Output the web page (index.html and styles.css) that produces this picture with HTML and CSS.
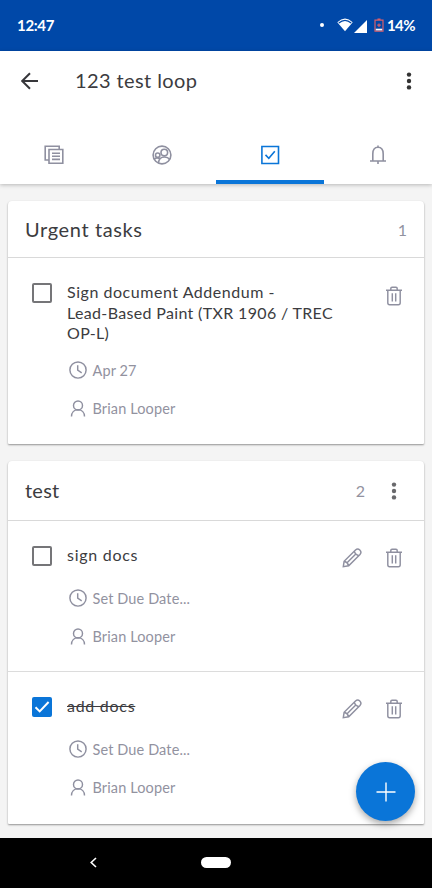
FILE: index.html
```html
<!DOCTYPE html>
<html lang="en">
<head>
<meta charset="utf-8">
<title>123 test loop</title>
<link rel="stylesheet" href="styles.css">
</head>
<body>
<svg class="defs" aria-hidden="true">
  <symbol id="trash" viewBox="0 0 18 20"><path d="M1 4.2h16M5.800 4V2.400Q5.800 1.300 7 1.300h4q1.200 0 1.200 1.100V4M2.800 4.500v12.200q0 2 1.800 2h8.800q1.800 0 1.800-2V4.500M7.300 7.300v8.300M10.700 7.300v8.300"/></symbol>
  <symbol id="pencil" viewBox="0 0 20 20"><path d="M1.300 18.700l.8-5.400L13.500 2q2.200-2 4.300 0 2.200 2.200.2 4.400L6.700 17.800zM2.100 13.300q3.300.7 4.600 4.500M5.300 14.600L13.800 6.100M12.300 3.200q.7 3.400 4.500 4.500"/></symbol>
  <symbol id="clock" viewBox="0 0 18 18"><circle cx="9" cy="9" r="8.100"/><path d="M8.700 4.200V9.200L12.700 11.800"/></symbol>
  <symbol id="person" viewBox="0 0 16 17"><circle cx="8" cy="5.400" r="4.500"/><path d="M1.500 16.500c0-4 2.500-6.700 6.500-6.700s6.500 2.700 6.500 6.700"/></symbol>
</svg>
<div class="status">
  <span class="time">12:47</span>
  <i class="dot"></i>
  <svg class="wifi" viewBox="0 0 16 14"><path d="M.3 4.200Q8-3 15.700 4.200L8 13.200z" fill="#fff"/><path d="M1.800 5.100Q8-.4 14.200 5.100" fill="none" stroke="#0048a8" stroke-width="1.300"/></svg>
  <svg class="signal" viewBox="0 0 13 13"><path d="M0 13L13 0v13z" fill="#fff"/></svg>
  <svg class="battery" viewBox="0 0 10 14"><path d="M1 2.200h8v11H1zM3.500 1.200h3M3.200 7.200h3.600M5 5.400v3.600" fill="none" stroke="#d95f6b" stroke-width="1.200"/><path d="M1.800 10.700h6.400v1.700H1.800z" fill="#fff"/></svg>
  <span class="pct">14%</span>
</div>
<header>
  <div class="bar">
    <svg class="back" viewBox="0 0 18 18"><path d="M17 9H1.500M9 1.200L1.200 9 9 16.800"/></svg>
    <h1>123 test loop</h1>
    <svg class="more" viewBox="0 0 6 18"><circle cx="3" cy="2.600" r="2.200"/><circle cx="3" cy="9" r="2.200"/><circle cx="3" cy="15.400" r="2.200"/></svg>
  </div>
  <nav class="tabs">
    <div class="tab"><svg class="icon" viewBox="0 0 20 20"><path d="M4.600 15H1.200V1.200h14v3.200M5 4.500h13.800v13.800H5zM8 8.200h8M8 11.300h8M8 14.400h8"/></svg></div>
    <div class="tab"><svg class="icon" viewBox="0 0 20 20"><circle cx="10" cy="10" r="8.900"/><circle cx="12.300" cy="7.600" r="3.300"/><circle cx="5.700" cy="10.200" r="2.200"/><path d="M6.500 18q.3-6 6-6 3.400 0 5.300 2.500M2.100 14.300q2-2.200 5.600-.9"/></svg></div>
    <div class="tab active"><svg class="icon" viewBox="0 0 20 20"><path d="M1.900 1.500h16.600v17H1.900zM5.500 9.900l3.300 3.300 6-7"/></svg></div>
    <div class="tab"><svg class="icon" viewBox="0 0 20 20"><path d="M4.800 16V9q0-6.700 5.200-6.700T15.200 9v7M2 16h16M10 2.300V.6M10 16v3"/></svg></div>
  </nav>
</header>
<main>
  <section class="card">
    <div class="head"><h2 class="urgent">Urgent tasks</h2><span class="count">1</span></div>
    <article class="task">
      <i class="box"></i>
      <div class="body">
        <p class="title"><span class="wide">Sign document Addendum -</span><br>Lead-Based Paint (TXR 1906 / TREC<br>OP-L)</p>
        <p class="meta"><svg class="clock"><use href="#clock"/></svg><span>Apr 27</span></p>
        <p class="meta"><svg class="person"><use href="#person"/></svg><span>Brian Looper</span></p>
      </div>
      <svg class="trash"><use href="#trash"/></svg>
    </article>
  </section>
  <section class="card second">
    <div class="head"><h2>test</h2><span class="count">2</span><svg class="more grey" viewBox="0 0 6 18"><circle cx="3" cy="2.600" r="2.200"/><circle cx="3" cy="9" r="2.200"/><circle cx="3" cy="15.400" r="2.200"/></svg></div>
    <article class="task">
      <i class="box"></i>
      <div class="body">
        <p class="title"><span class="wider">sign docs</span></p>
        <p class="meta"><svg class="clock"><use href="#clock"/></svg><span>Set Due Date...</span></p>
        <p class="meta"><svg class="person"><use href="#person"/></svg><span>Brian Looper</span></p>
      </div>
      <svg class="pencil"><use href="#pencil"/></svg>
      <svg class="trash"><use href="#trash"/></svg>
    </article>
    <article class="task">
      <i class="box checked"><svg viewBox="0 0 20 20"><path d="M3.500 10.200l4.200 4.200L16.600 5"/></svg></i>
      <div class="body">
        <p class="title"><s class="wider">add docs</s></p>
        <p class="meta"><svg class="clock"><use href="#clock"/></svg><span>Set Due Date...</span></p>
        <p class="meta"><svg class="person"><use href="#person"/></svg><span>Brian Looper</span></p>
      </div>
      <svg class="pencil"><use href="#pencil"/></svg>
      <svg class="trash"><use href="#trash"/></svg>
    </article>
  </section>
  <div class="fab"><svg viewBox="0 0 20 20"><path d="M10 .5v19M.5 10h19"/></svg></div>
</main>
<footer>
  <svg class="navback" viewBox="0 0 7 11"><path d="M6 1L1.200 5.500 6 10"/></svg>
  <i class="pill"></i>
</footer>
</body>
</html>
```
FILE: styles.css
```css
* { box-sizing: border-box; margin: 0; }
body { width: 432px; height: 888px; overflow: hidden; display: flex; flex-direction: column; font-family: Lato, "Liberation Sans", sans-serif; color: #3c3c40; background: #f4f4f4; }
svg { display: block; flex: none; }
.defs { position: absolute; width: 0; height: 0; }
.status { height: 51px; flex: none; background: #0048a8; color: #fff; display: flex; align-items: center; padding: 0 17px 1px; font-weight: 700; font-size: 15px; }
.time { letter-spacing: -.3px; flex: 1; }
.dot { width: 4px; height: 4px; border-radius: 50%; background: #fff; margin-right: 13px; }
.wifi { width: 16px; height: 14px; margin-right: 1px; }
.signal { width: 13px; height: 13px; margin: 2px 7px 0 0; }
.battery { width: 10px; height: 14px; margin-right: 3px; }
.pct { width: 28px; white-space: nowrap; letter-spacing: -.6px; }
header { height: 133px; flex: none; background: #fff; box-shadow: 0 1px 4px rgba(0,0,0,.25); display: flex; flex-direction: column; position: relative; }
.bar { height: 60px; display: flex; align-items: center; padding: 0 20px 0 21px; }
.back { width: 18px; height: 18px; fill: none; stroke: #37373b; stroke-width: 2; margin-right: 36px; }
h1 { flex: 1; font-size: 20px; font-weight: 400; letter-spacing: .4px; line-height: 24px; padding-bottom: 2px; }
.more { width: 6px; height: 18px; fill: #333; }
.tabs { flex: 1; display: grid; grid-template-columns: repeat(4, 1fr); padding-top: 13px; }
.tab { display: flex; justify-content: center; padding-top: 21px; color: #8f90a0; }
.tab.active { color: #0a75d8; border-bottom: 4px solid #0a75d8; }
.icon { width: 20px; height: 20px; fill: none; stroke: currentColor; stroke-width: 1.6; }
main { flex: 1; padding: 17px 8px 0; position: relative; }
.card { background: #fff; border-radius: 4px 4px 1px 1px; box-shadow: 0 1px 2px rgba(0,0,0,.4); }
.card.second { margin-top: 17px; }
.head { height: 57px; display: flex; align-items: center; padding: 0 17px; border-bottom: 1px solid #d9d9d9; }
.second .head { height: 60px; padding-right: 27px; }
h2 { flex: 1; font-size: 20px; font-weight: 400; line-height: 24px; letter-spacing: .25px; }
h2.urgent { letter-spacing: .62px; }
.second h2 { padding-bottom: 2px; }
.count { font-size: 16px; color: #92929f; }
.more.grey { fill: #69696c; margin-left: 26px; }
.task { display: flex; height: 186px; padding: 25px 21px 0 24px; }
.second .task { height: 150px; }
.second .task + .task { height: 153px; border-top: 1px solid #dcdcdc; }
.second .box { margin-top: -.5px; }
.box { width: 20px; height: 20px; flex: none; border: 2px solid #757578; border-radius: 2px; margin-right: 15px; }
.box.checked { background: #0a75d8; border: 0; }
.checked svg { width: 20px; height: 20px; fill: none; stroke: #fff; stroke-width: 2; }
.body { flex: 1; min-width: 0; margin-top: -1px; }
.title { font-size: 16px; line-height: 20.5px; min-height: 26.5px; margin-bottom: 16.5px; white-space: nowrap; letter-spacing: .34px; }
.wide { letter-spacing: .54px; }
.wider { letter-spacing: .72px; }
.meta { height: 20px; display: flex; align-items: center; color: #92929f; font-size: 14.5px; letter-spacing: .12px; white-space: nowrap; }
.meta + .meta { margin-top: 18px; }
.clock { width: 18px; height: 18px; margin: 0 5.500px 0 2px; }
.person { width: 16px; height: 17px; margin: 0 6.500px 0 3px; }
.clock, .person, .trash, .pencil { fill: none; stroke: #8f90a0; stroke-width: 1.45; }
.trash { width: 18px; height: 20px; margin-top: 3px; }
.pencil { width: 20px; height: 20px; margin: 3px 23px 0 0; }
.second .trash, .second .pencil { margin-top: 2px; }
.fab { position: absolute; right: 17px; bottom: 17px; width: 59px; height: 59px; border-radius: 50%; background: #0a75d8; box-shadow: 0 3px 7px rgba(0,0,0,.35); display: flex; align-items: center; justify-content: center; }
.fab svg { width: 20px; height: 20px; stroke: #fff; stroke-width: 1.4; }
footer { height: 50px; flex: none; background: #000; display: flex; align-items: center; padding: 0 0 1px 90px; }
.navback { width: 7px; height: 11px; fill: none; stroke: #fff; stroke-width: 1.6; margin-right: 104px; }
.pill { width: 30px; height: 11px; border-radius: 6px; background: #fff; }
```
